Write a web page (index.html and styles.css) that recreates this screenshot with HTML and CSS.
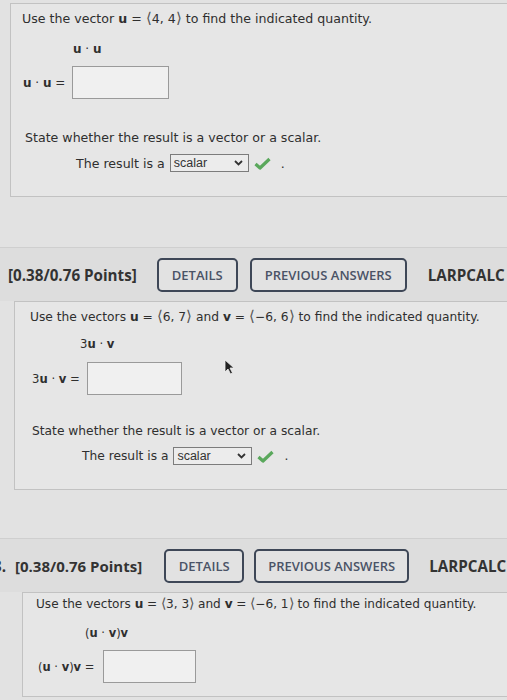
FILE: index.html
```html
<!DOCTYPE html>
<html>
<head>
<meta charset="utf-8">
<link rel="stylesheet" href="styles.css">
</head>
<body>
<div class="page">
  <div class="qbox q1">
    <p class="prompt">Use the vector <b>u</b> = <span class="ang">⟨</span>4, 4<span class="ang">⟩</span> to find the indicated quantity.</p>
    <p class="expr"><b>u</b> · <b>u</b></p>
    <div class="answer-row"><span class="lbl"><b>u</b> · <b>u</b> =</span><span class="input"></span></div>
    <p class="prompt2">State whether the result is a vector or a scalar.</p>
    <div class="result-row">The result is a <span class="select"><span>scalar</span><svg class="chev" width="9" height="6" viewBox="0 0 9 6"><path d="M1 1 L4.5 4.5 L8 1" fill="none" stroke="#333" stroke-width="1.8"/></svg></span><svg class="check" width="17" height="13" viewBox="0 0 17 13"><path d="M1.5 7 L6 11 L15.5 2" fill="none" stroke="#5aa85c" stroke-width="3.2" stroke-linejoin="round"/></svg><span class="dot">.</span></div>
  </div>

  <div class="qhead h2">
    <span class="pts">[0.38/0.76 Points]</span>
    <span class="btn b-details">DETAILS</span>
    <span class="btn b-prev">PREVIOUS ANSWERS</span>
    <span class="code">LARPCALC</span>
  </div>
  <div class="qbox q2">
    <p class="prompt">Use the vectors <b>u</b> = <span class="ang">⟨</span>6, 7<span class="ang">⟩</span> and <b>v</b> = <span class="ang">⟨</span>−6, 6<span class="ang">⟩</span> to find the indicated quantity.</p>
    <p class="expr">3<b>u</b> · <b>v</b></p>
    <div class="answer-row"><span class="lbl">3<b>u</b> · <b>v</b> =</span><span class="input"></span></div>
    <p class="prompt2">State whether the result is a vector or a scalar.</p>
    <div class="result-row">The result is a <span class="select"><span>scalar</span><svg class="chev" width="9" height="6" viewBox="0 0 9 6"><path d="M1 1 L4.5 4.5 L8 1" fill="none" stroke="#333" stroke-width="1.8"/></svg></span><svg class="check" width="17" height="13" viewBox="0 0 17 13"><path d="M1.5 7 L6 11 L15.5 2" fill="none" stroke="#5aa85c" stroke-width="3.2" stroke-linejoin="round"/></svg><span class="dot">.</span></div>
    <svg class="cursor" width="11" height="16" viewBox="0 0 11 16"><path d="M1 1 L1 13 L4 10 L6.5 15 L8.5 14 L6 9 L10 9 Z" fill="#222" stroke="#f0f0f0" stroke-width="0.8"/></svg>
  </div>

  <div class="qhead h3">
    <span class="num">3.</span>
    <span class="pts">[0.38/0.76 Points]</span>
    <span class="btn b-details">DETAILS</span>
    <span class="btn b-prev">PREVIOUS ANSWERS</span>
    <span class="code">LARPCALC</span>
  </div>
  <div class="qbox q3">
    <p class="prompt">Use the vectors <b>u</b> = <span class="ang">⟨</span>3, 3<span class="ang">⟩</span> and <b>v</b> = <span class="ang">⟨</span>−6, 1<span class="ang">⟩</span> to find the indicated quantity.</p>
    <p class="expr">(<b>u</b> · <b>v</b>)<b>v</b></p>
    <div class="answer-row"><span class="lbl">(<b>u</b> · <b>v</b>)<b>v</b> =</span><span class="input"></span></div>
  </div>
</div>
</body>
</html>
```

FILE: styles.css
```css
html, body {
  margin: 0;
  padding: 0;
}
body {
  background: #e2e2e2;
  overflow: hidden;
  width: 507px;
  height: 700px;
  font-family: "DejaVu Sans", Verdana, sans-serif;
  font-size: 12.6px;
  color: #2f2f2f;
}
.page {
  width: 560px;
  padding-top: 3px;
}
p {
  margin: 0;
}
b {
  font-weight: bold;
}
.qbox {
  position: relative;
  border: 1px solid #c2c2c2;
  border-right: none;
  background: #e6e6e6;
}
.prompt, .expr, .prompt2 {
  line-height: 16px;
  white-space: nowrap;
}
.ang {
  font-size: 1.19em;
  line-height: 0;
  font-weight: 200;
  color: #555;
}
.answer-row {
  display: flex;
  align-items: center;
  height: 33px;
}
.lbl {
  white-space: nowrap;
  font-size: 0.95em;
}
.input {
  display: block;
  width: 97px;
  height: 33px;
  border: 1px solid #9a9a9a;
  background: #f0f0f0;
  box-sizing: border-box;
}
.expr {
  font-size: 0.95em;
}
.result-row {
  display: flex;
  align-items: center;
  height: 18px;
  white-space: nowrap;
}
.select {
  display: flex;
  align-items: center;
  justify-content: space-between;
  width: 79px;
  height: 18px;
  box-sizing: border-box;
  border: 1px solid #7c7c7c;
  background: #ececec;
  padding: 0 5px 0 3px;
  margin-left: 5px;
  font-family: "Liberation Sans", Arial, sans-serif;
  font-size: 12.5px;
  color: #333;
}
.check {
  margin-left: 5px;
}
.dot {
  margin-left: 10px;
}

/* question 1 */
.q1 {
  margin-left: 10px;
  padding: 7px 0 24px 11px;
}
.q1 .expr { margin: 14px 0 0 51px; }
.q1 .answer-row { margin-top: 9px; }
.q1 .lbl { margin: 0 7px 0 1px; }
.q1 .prompt2 { margin: 31px 0 0 3px; }
.q1 .result-row { margin: 8px 0 0 54px; }

/* headers */
.qhead {
  display: flex;
  align-items: center;
  height: 53px;
  border-top: 1px solid #cfcfcf;
  background: #dddddd;
  font-family: "Open Sans", sans-serif;
  white-space: nowrap;
}
.h2 {
  margin-top: 50px;
  padding-left: 8px;
}
.h3 {
  margin-top: 48px;
  margin-left: -7px;
}
.num {
  font-weight: bold;
  font-size: 15.2px;
  color: #333;
  width: 22px;
}
.pts {
  font-weight: bold;
  font-size: 15.2px;
  color: #333;
}
.btn {
  display: flex;
  align-items: center;
  justify-content: center;
  height: 34px;
  box-sizing: border-box;
  border: 2px solid #3e4757;
  border-radius: 5px;
  font-size: 13px;
  font-weight: 600;
  color: #4a5366;
  background: #e2e2e2;
}
.b-details {
  width: 81px;
  margin-left: 20px;
}
.b-prev {
  width: 157px;
  margin-left: 12px;
}
.code {
  margin-left: 21px;
  font-weight: bold;
  font-size: 15.2px;
  color: #333;
}
.h3 .pts { font-size: 15px; }
.h3 .b-details { width: 80px; margin-left: 22px; }
.h3 .b-prev { width: 155px; margin-left: 10px; }
.h3 .code { margin-left: 20px; }

/* question 2 */
.q2 {
  margin-left: 14px;
  padding: 7px 0 24px 15px;
  font-size: 12.25px;
}
.q2 .expr { margin: 11px 0 0 50px; }
.q2 .answer-row { margin-top: 10px; }
.q2 .lbl { margin: 0 7px 0 2px; }
.q2 .input { width: 95px; }
.q2 .prompt2 { margin: 28px 0 0 2px; }
.q2 .result-row { margin: 8px 0 0 52px; }
.cursor {
  position: absolute;
  left: 209px;
  top: 57px;
}

/* question 3 */
.q3 {
  margin-left: 22px;
  padding: 3px 0 13px 13px;
  font-size: 12.1px;
}
.q3 .expr { margin: 13px 0 0 49px; }
.q3 .answer-row { margin-top: 9px; }
.q3 .lbl { margin: 0 9px 0 2px; }
.q3 .input { width: 93px; }
```
